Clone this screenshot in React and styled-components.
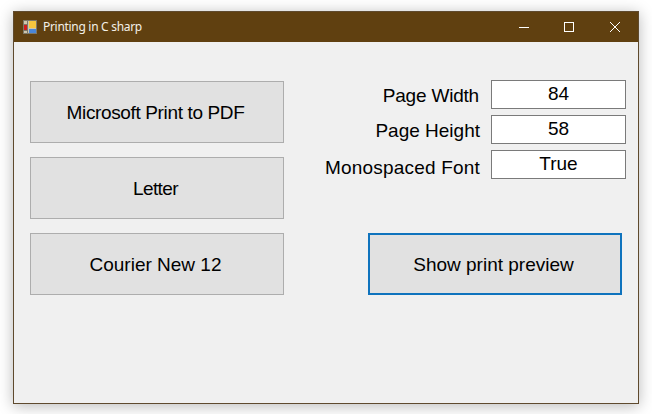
import styled, { createGlobalStyle } from 'styled-components';

const GlobalStyle = createGlobalStyle`
  html, body {
    margin: 0;
    padding: 0;
    background: #ffffff;
  }
`;

const Page = styled.div`
  width: 652px;
  height: 414px;
  padding: 11px 0 0 13px;
  box-sizing: border-box;
  overflow: hidden;
`;

const Window = styled.div`
  width: 626px;
  height: 393px;
  box-sizing: border-box;
  border: 1px solid #5f4a2e;
  background: #f0f0f0;
  box-shadow: 0 2px 14px rgba(0, 0, 0, 0.28);
  display: flex;
  flex-direction: column;
`;

const TitleBar = styled.div`
  height: 30px;
  flex: none;
  background: #604010;
  display: flex;
  align-items: center;
  padding-left: 9px;
`;

const Title = styled.span`
  margin-left: 6px;
  padding-bottom: 2px;
  color: #f4f0e8;
  font: 12px "Noto Sans", "Open Sans", sans-serif;
  letter-spacing: -0.3px;
  flex: 1;
`;

const CaptionButton = styled.div`
  width: 46px;
  height: 30px;
  box-sizing: border-box;
  padding-left: ${props => props.$inset || 0}px;
  display: flex;
  align-items: center;
  justify-content: center;
`;

const Content = styled.div`
  flex: 1;
  display: flex;
  padding: 38px 12px 0 16px;
  font-family: "Liberation Sans", Arial, sans-serif;
  font-size: 19px;
  color: #000;
`;

const LeftColumn = styled.div`
  width: 254px;
  padding-top: 1px;
  display: flex;
  flex-direction: column;
  gap: 14px;
`;

const RightColumn = styled.div`
  flex: 1;
  margin-left: 40px;
  display: flex;
  flex-direction: column;
`;

const Button = styled.div`
  width: 254px;
  height: 62px;
  box-sizing: border-box;
  flex: none;
  padding: 1px 3px 0 0;
  display: flex;
  align-items: center;
  justify-content: center;
  letter-spacing: ${props => props.$tracking || 0}px;
  background: #e1e1e1;
  border: ${props => (props.$focused ? '2px solid #0f73bd' : '1px solid #adadad')};
`;

const Fields = styled.div`
  display: grid;
  grid-template-columns: 156px 135px;
  grid-auto-rows: 29px;
  row-gap: 6px;
  column-gap: 11px;
`;

const Label = styled.div`
  text-align: right;
  white-space: nowrap;
  line-height: 29px;
  padding-top: ${props => props.$drop || 1}px;
  padding-right: ${props => props.$inset || 0}px;
  letter-spacing: ${props => props.$tracking || 0}px;
`;

const Field = styled.div`
  box-sizing: border-box;
  border: 1px solid #7a7a7a;
  background: #fff;
  line-height: 26px;
  text-align: center;
`;

const PreviewRow = styled.div`
  margin: 54px 0 0 44px;
`;

const AppIcon = () => (
  <svg width="14" height="14" viewBox="0 0 14 14">
    <rect x="0" y="0" width="14" height="14" fill="#cfc6ac" />
    <path d="M0 .5H14M0 13.5H14M.5 0V14M13.5 0V14M4.5 0V14M0 4.5H4M0 10.5H4" stroke="#7d7868" strokeWidth="1" />
    <rect x="1" y="5" width="3" height="5" fill="#d01c1c" />
    <rect x="6" y="1" width="7" height="7" fill="#f6c63e" />
    <rect x="6" y="9" width="7" height="4" fill="#4a86d8" />
  </svg>
);

export default function App() {
  return (
    <Page>
      <GlobalStyle />
      <Window>
        <TitleBar>
          <AppIcon />
          <Title>Printing in C sharp</Title>
          <CaptionButton $inset={2}>
            <svg width="10" height="10" viewBox="0 0 10 10">
              <path d="M0 5.5H10" stroke="#fff" strokeWidth="1" />
            </svg>
          </CaptionButton>
          <CaptionButton>
            <svg width="10" height="10" viewBox="0 0 10 10">
              <rect x="0.5" y="0.5" width="9" height="9" fill="none" stroke="#fff" />
            </svg>
          </CaptionButton>
          <CaptionButton>
            <svg width="10" height="10" viewBox="0 0 10 10">
              <path d="M0 0L10 10M10 0L0 10" stroke="#fff" strokeWidth="1" />
            </svg>
          </CaptionButton>
        </TitleBar>
        <Content>
          <LeftColumn>
            <Button $tracking={-0.36}>Microsoft Print to PDF</Button>
            <Button $tracking={-0.6}>Letter</Button>
            <Button>Courier New 12</Button>
          </LeftColumn>
          <RightColumn>
            <Fields>
              <Label $tracking={-0.2} $inset={1}>Page Width</Label>
              <Field>84</Field>
              <Label>Page Height</Label>
              <Field>58</Field>
              <Label $tracking={0.2} $drop={3}>Monospaced Font</Label>
              <Field>True</Field>
            </Fields>
            <PreviewRow>
              <Button $focused>Show print preview</Button>
            </PreviewRow>
          </RightColumn>
        </Content>
      </Window>
    </Page>
  );
}
